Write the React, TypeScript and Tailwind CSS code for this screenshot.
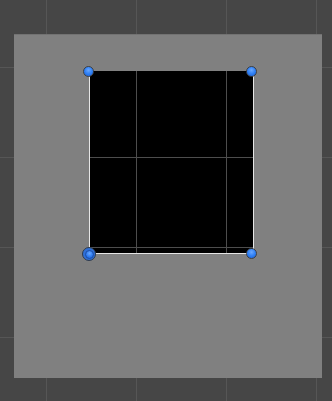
import React from 'react';

function Handle({ big = false, className = '' }: { big?: boolean; className?: string }) {
  if (big) {
    return (
      <div className={`absolute w-[14px] h-[14px] rounded-full border border-[#2f3a4a] bg-[#2f6fd6] flex items-center justify-center ${className}`}>
        <div className="w-[9px] h-[9px] rounded-full border border-[#1d4fa8] bg-[radial-gradient(circle_at_50%_35%,#6aa8ff_0%,#2f7cf0_55%,#1f5fcc_100%)]" />
      </div>
    );
  }
  return (
    <div className={`absolute w-[11px] h-[11px] rounded-full border border-[#3a3f47] bg-[radial-gradient(circle_at_50%_35%,#6aa8ff_0%,#2f80f5_50%,#1c5fd0_100%)] ${className}`} />
  );
}

export default function App() {
  return (
    <div className="relative w-[332px] h-[401px] overflow-hidden bg-[#464646]">
      {/* workspace grid */}
      <svg className="absolute inset-0" width="332" height="401">
        {[46, 136, 226, 316].map(x => (
          <line key={'v' + x} x1={x + 0.5} y1={0} x2={x + 0.5} y2={401} stroke="#565656" strokeWidth={1} />
        ))}
        {[67, 157, 247, 337].map(y => (
          <line key={'h' + y} x1={0} y1={y + 0.5} x2={332} y2={y + 0.5} stroke="#565656" strokeWidth={1} />
        ))}
      </svg>

      <div className="relative pt-[34px] pl-[14px]">
        <div className="w-[308px] h-[344px] bg-[#808080] border-t border-[#727272] pt-[36px] pl-[75px]">
          <div className="relative w-[165px] h-[183px] bg-black border-l border-r border-b border-[#e6e6e6]">
            <svg className="absolute inset-0" width="163" height="182">
              <line x1={46.5} y1={0} x2={46.5} y2={182} stroke="#4d4d4d" />
              <line x1={136.5} y1={0} x2={136.5} y2={182} stroke="#4d4d4d" />
              <line x1={0} y1={86.5} x2={163} y2={86.5} stroke="#4d4d4d" />
              <line x1={0} y1={176.5} x2={163} y2={176.5} stroke="#4d4d4d" />
            </svg>
            <Handle className="left-[-7px] top-[-5px]" />
            <Handle className="right-[-4px] top-[-5px]" />
            <Handle big className="left-[-8px] bottom-[-8px]" />
            <Handle className="right-[-4px] bottom-[-6px]" />
          </div>
        </div>
      </div>
    </div>
  );
}
